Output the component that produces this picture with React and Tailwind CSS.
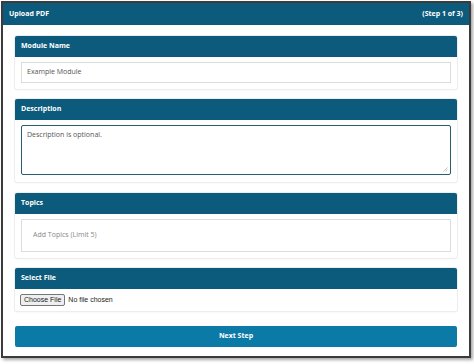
export default function App() {
  const head = "h-[21px] bg-[#0d5b7c] rounded-t-[2px] flex items-center px-[6px] text-[7px] font-bold text-white";
  const card = "bg-white rounded-[2px] shadow-[0_0_0_1px_#ededed,0_1px_2px_rgba(0,0,0,0.08)]";
  return (
    <div className="w-[474px] h-[364px] bg-white" style={{ fontFamily: "'Open Sans', sans-serif" }}>
      <div className="ml-[1px] mt-[1px] w-[470px] h-[357px] border-2 border-[#3b3b3b] bg-white shadow-[2px_2px_3px_rgba(0,0,0,0.35)] flex flex-col">
        <div className="h-[22px] bg-[#0d5b7c] flex items-center justify-between px-[6px] text-[7px] font-bold text-white">
          <span>Upload PDF</span>
          <span>(Step 1 of 3)</span>
        </div>
        <div className="flex flex-col px-[12px] pt-[11px]">
          <div className={card}>
            <div className={head}>Module Name</div>
            <div className="pt-[5px] pb-[6px] px-[6px]">
              <div className="h-[21px] border border-[#dcdcdc] flex items-center px-[5px] text-[7px] text-[#555]">Example Module</div>
            </div>
          </div>
          <div className={card + " mt-[10px]"}>
            <div className={head}>Description</div>
            <div className="pt-[5px] pb-[7px] px-[6px]">
              <div className="relative h-[50px] border border-[#2a5d70] rounded-[2px] px-[5px] pt-[4px] text-[7px] text-[#555]">
                Description is optional.
                <svg className="absolute right-[2px] bottom-[2px]" width="5" height="5" viewBox="0 0 5 5">
                  <path d="M4.5 0.5L0.5 4.5M4.5 2.5L2.5 4.5" stroke="#999" strokeWidth="0.6" />
                </svg>
              </div>
            </div>
          </div>
          <div className={card + " mt-[11px]"}>
            <div className={head}>Topics</div>
            <div className="pt-[5px] pb-[6px] px-[6px]">
              <div className="h-[33px] border border-[#dcdcdc] flex items-center px-[11px] text-[7px] text-[#888]">Add Topics (Limit 5)</div>
            </div>
          </div>
          <div className={card + " mt-[10px]"}>
            <div className={head}>Select File</div>
            <div className="h-[22px] flex items-center px-[5px] gap-[3px] text-[7px]" style={{ fontFamily: "'Liberation Sans', Arial, sans-serif" }}>
              <span className="h-[12px] px-[3px] flex items-center border border-[#767676] rounded-[2px] bg-[#efefef] text-[#222]">Choose File</span>
              <span className="text-[#222]">No file chosen</span>
            </div>
          </div>
          <div className="mt-[15px] h-[21px] bg-[#0b7aa6] rounded-[2px] flex items-center justify-center text-[7px] font-bold text-white">Next Step</div>
        </div>
      </div>
    </div>
  );
}
